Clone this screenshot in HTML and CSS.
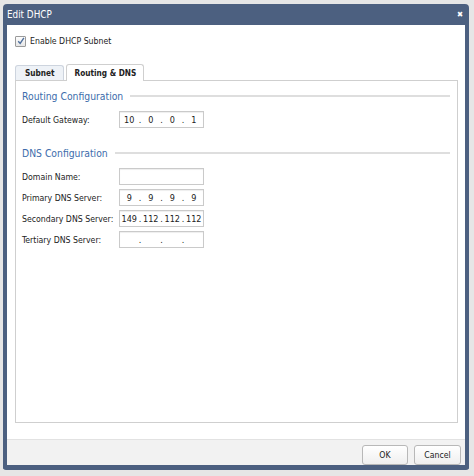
FILE: index.html
```html
<!DOCTYPE html>
<html lang="en">
<head>
    <meta charset="UTF-8">
    <title>Edit DHCP</title>
    <link rel="stylesheet" href="styles.css">
</head>
<body>
    <div class="dialog">
        <div class="titlebar">
            <span class="title">Edit DHCP</span>
            <span class="close">&#10006;</span>
        </div>

        <div class="content">
            <label class="enable">
                <span class="checkbox">
                    <svg width="8" height="8" viewBox="0 0 8 8">
                        <path d="M1.2 4.2 L3.2 6.4 L6.9 0.8" fill="none" stroke="#4f6f9c" stroke-width="1.4"/>
                    </svg>
                </span>
                Enable DHCP Subnet
            </label>

            <div class="tabs">
                <div class="tab">Subnet</div>
                <div class="tab active">Routing &amp; DNS</div>
            </div>

            <div class="panel">
                <div class="legend"><span>Routing Configuration</span><span class="rule"></span></div>
                <div class="field first">
                    <span class="label">Default Gateway:</span>
                    <div class="ip">
                        <span>10</span><i>.</i><span>0</span><i>.</i><span>0</span><i>.</i><span>1</span>
                    </div>
                </div>

                <div class="legend section"><span>DNS Configuration</span><span class="rule"></span></div>
                <div class="field first">
                    <span class="label">Domain Name:</span>
                    <div class="ip"></div>
                </div>
                <div class="field">
                    <span class="label">Primary DNS Server:</span>
                    <div class="ip">
                        <span>9</span><i>.</i><span>9</span><i>.</i><span>9</span><i>.</i><span>9</span>
                    </div>
                </div>
                <div class="field">
                    <span class="label">Secondary DNS Server:</span>
                    <div class="ip">
                        <span>149</span><i>.</i><span>112</span><i>.</i><span>112</span><i>.</i><span>112</span>
                    </div>
                </div>
                <div class="field">
                    <span class="label">Tertiary DNS Server:</span>
                    <div class="ip">
                        <span></span><i>.</i><span></span><i>.</i><span></span><i>.</i><span></span>
                    </div>
                </div>
            </div>
        </div>

        <div class="footer">
            <button class="btn ok">OK</button>
            <button class="btn cancel">Cancel</button>
        </div>
    </div>
</body>
</html>
```

FILE: styles.css
```css
body {
    margin: 0;
    background: #e6e6e6;
    font-family: "DejaVu Sans Condensed", "DejaVu Sans", sans-serif;
    font-size: 8.7px;
    color: #222;
}

.dialog {
    margin: 4px 0 0 3px;
    width: 466px;
    height: 466px;
    box-sizing: border-box;
    border: 4px solid #4c6080;
    border-top: 0;
    border-bottom-width: 5px;
    border-radius: 4px 4px 3px 3px;
    background: #fff;
    display: flex;
    flex-direction: column;
}

.titlebar {
    height: 21px;
    flex: none;
    background: #4c6080;
    color: #fff;
    display: flex;
    align-items: center;
    justify-content: space-between;
    padding-right: 2px;
}

.title {
    font-size: 9.8px;
}

.close {
    font-size: 8px;
    font-weight: bold;
}

.content {
    flex: 1;
    display: flex;
    flex-direction: column;
    padding: 10px 7px 16px 8px;
}

.enable {
    display: flex;
    align-items: center;
    gap: 4px;
    height: 12px;
}

.checkbox {
    width: 9px;
    height: 9px;
    border: 1px solid #9a9a9a;
    border-radius: 1px;
    background: linear-gradient(#fdfdfd, #e6e6e6);
    display: flex;
    align-items: center;
    justify-content: center;
}

.tabs {
    display: flex;
    align-items: flex-end;
    gap: 2px;
    margin-top: 17px;
    height: 16px;
}

.tab {
    font-weight: bold;
    font-size: 8.2px;
    height: 15px;
    box-sizing: border-box;
    padding: 0 8px 0 9px;
    display: flex;
    align-items: center;
    border: 1px solid #cdd4de;
    border-bottom: 0;
    border-radius: 3px 3px 0 0;
    background: #eef2f7;
}

.tab.active {
    height: 17px;
    margin-bottom: -1px;
    position: relative;
    background: #fff;
    border-color: #cfcfcf;
    padding: 0 7px 0 8px;
}

.panel {
    flex: 1;
    border: 1px solid #cfcfcf;
    padding: 8px 7px 0 6px;
}

.legend {
    display: flex;
    align-items: center;
    gap: 7px;
    height: 14px;
    font-size: 10.3px;
    color: #3c6cab;
}

.legend.section {
    margin-top: 18px;
}

.rule {
    flex: 1;
    border-top: 2px solid #dedede;
}

.field {
    display: flex;
    align-items: center;
    height: 17px;
    margin-top: 4px;
}

.field.first {
    margin-top: 8px;
}

.label {
    width: 97px;
}

.ip {
    width: 85px;
    height: 17px;
    box-sizing: border-box;
    border: 1px solid #cacaca;
    box-shadow: inset 0 1px 1px rgba(0, 0, 0, 0.07);
    display: flex;
    align-items: center;
    font-size: 9px;
}

.ip span {
    flex: 1;
    text-align: center;
}

.ip i {
    font-style: normal;
    width: 3px;
    text-align: center;
}

.footer {
    flex: none;
    height: 26px;
    box-sizing: border-box;
    border-top: 1px solid #e2e2e2;
    background: #f2f2f2;
    display: flex;
    justify-content: flex-end;
    gap: 6px;
    padding: 5px 4px 0 0;
}

.btn {
    height: 20px;
    border: 1px solid #b8b8b8;
    border-radius: 3px;
    background: linear-gradient(#ffffff, #efefef);
    font-family: inherit;
    font-size: 8.7px;
    color: #222;
    padding: 0;
}

.btn.ok {
    width: 46px;
}

.btn.cancel {
    width: 47px;
}
```
